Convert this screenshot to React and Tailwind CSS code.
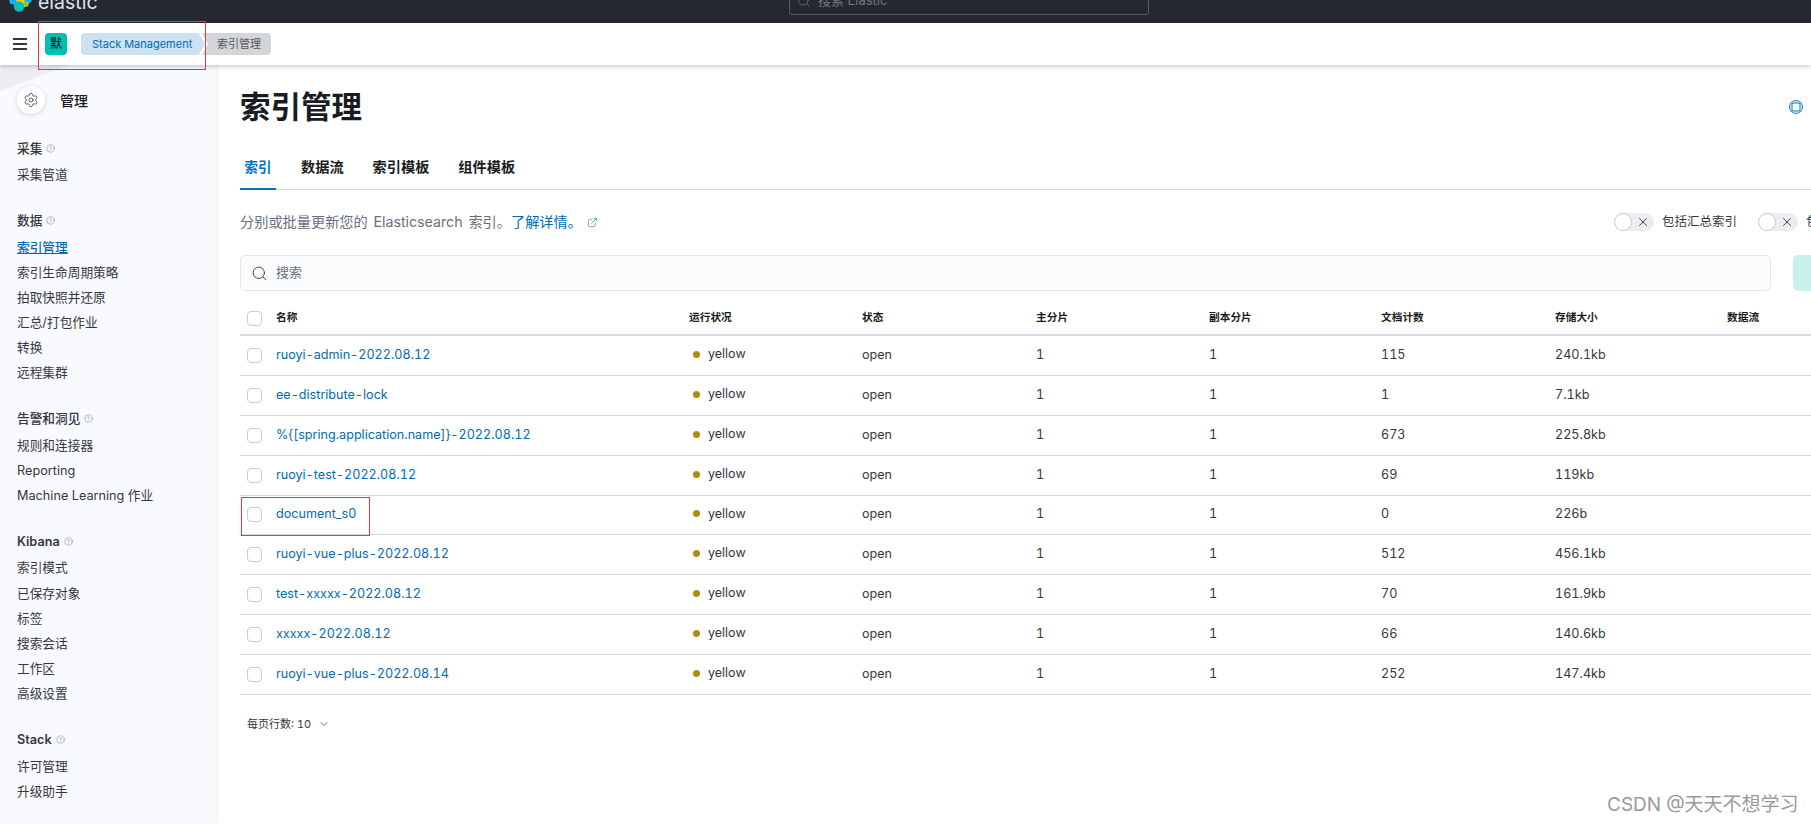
import { Search, ExternalLink, X, ChevronDown, Settings, CircleHelp } from "lucide-react";

const FONT = "font-['Inter','Noto_Sans_CJK_SC',sans-serif]";

const navGroups = [
  { title: "采集", items: ["采集管道"] },
  { title: "数据", items: ["索引管理", "索引生命周期策略", "拍取快照并还原", "汇总/打包作业", "转换", "远程集群"] },
  { title: "告警和洞见", items: ["规则和连接器", "Reporting", "Machine Learning 作业"] },
  { title: "Kibana", bold: true, items: ["索引模式", "已保存对象", "标签", "搜索会话", "工作区", "高级设置"] },
  { title: "Stack", bold: true, items: ["许可管理", "升级助手"] },
];

const tabs = ["索引", "数据流", "索引模板", "组件模板"];

const columns = ["运行状况", "状态", "主分片", "副本分片", "文档计数", "存储大小", "数据流"];

const rows = [
  ["ruoyi-admin-2022.08.12", "115", "240.1kb"],
  ["ee-distribute-lock", "1", "7.1kb"],
  ["%{[spring.application.name]}-2022.08.12", "673", "225.8kb"],
  ["ruoyi-test-2022.08.12", "69", "119kb"],
  ["document_s0", "0", "226b"],
  ["ruoyi-vue-plus-2022.08.12", "512", "456.1kb"],
  ["test-xxxxx-2022.08.12", "70", "161.9kb"],
  ["xxxxx-2022.08.12", "66", "140.6kb"],
  ["ruoyi-vue-plus-2022.08.14", "252", "147.4kb"],
];

function Checkbox() {
  return <div className="ml-[7px] h-[15px] w-[15px] rounded-[4px] border border-[#c9cbcd] bg-white" />;
}

function Toggle({ label }) {
  return (
    <div className="flex shrink-0 items-center">
      <div className="flex h-[18px] w-10 items-center justify-between rounded-full bg-[#ebedf0] pr-[4px]">
        <div className="h-[18px] w-[18px] rounded-full border border-[#c9cbcd] bg-white" />
        <X size={14} strokeWidth={1.5} className="text-[#343741]" />
      </div>
      <span className="ml-2 whitespace-nowrap text-[12.5px] text-[#343741]">{label}</span>
    </div>
  );
}

function Logo() {
  return (
    <svg width="23" height="16" viewBox="0 0 23 16" className="mt-[2px] shrink-0">
      <circle cx="12" cy="3" r="9" fill="#f4f6f8" />
      <circle cx="12" cy="1" r="6" fill="#fec514" />
      <circle cx="4" cy="5" r="3.6" fill="#1ba9f5" />
      <circle cx="19" cy="4" r="3.6" fill="#1ba9f5" />
      <circle cx="17" cy="8" r="2.8" fill="#93c90e" />
      <circle cx="10" cy="10.5" r="5.2" fill="#00bfb3" />
    </svg>
  );
}

export default function App() {
  return (
    <div className={`${FONT} relative flex h-[824px] w-[1811px] flex-col overflow-hidden bg-white tabular-nums`}>
      {/* Top bar, cut off by the screenshot */}
      <div className="relative flex h-[23px] shrink-0 items-start overflow-hidden bg-[#25282f]">
        <div className="-mt-[7px] ml-[9px] flex h-[20px] items-center">
          <Logo />
          <span className="ml-[6px] text-[19.5px] leading-none text-[#dfe5ef]">elastic</span>
        </div>
        <div className="absolute bottom-2 left-[789px] flex h-[26px] w-[360px] items-end rounded-[3px] border border-[#5a5d63] pb-[7px] pl-[7px]">
          <Search size={14} strokeWidth={1.4} className="-mb-[1px] text-[#74767b]" />
          <span className="ml-[7px] text-[13px] leading-none text-[#74767b]">搜索 Elastic</span>
        </div>
      </div>

      {/* Breadcrumb bar */}
      <div className="relative z-10 flex h-[42px] shrink-0 items-center bg-white shadow-[0_2px_4px_rgba(0,0,0,0.18)]">
        <div className="ml-[13px] flex w-[14px] flex-col gap-[3px]">
          <div className="h-[2px] bg-[#343741]" />
          <div className="h-[2px] bg-[#343741]" />
          <div className="h-[2px] bg-[#343741]" />
        </div>
        <div className="ml-[18px] flex h-[22px] w-[22px] items-center justify-center rounded-[4px] bg-[#00bfb3] text-[12px] text-black">默</div>
        <div className="ml-[14px] flex h-[22px] w-[124px] items-center rounded-l-[4px] bg-[#cce2f3] pl-[11px] text-[11px] text-[#006bb4] [clip-path:polygon(0_0,95%_0,100%_50%,95%_100%,0_100%)]">
          Stack Management
        </div>
        <div className="-ml-[3px] flex h-[22px] w-[69px] items-center rounded-r-[4px] bg-[#d4d5d8] pl-[15px] text-[11px] text-[#53565e] [clip-path:polygon(0_0,100%_0,100%_100%,0_100%,6px_50%)]">
          索引管理
        </div>
      </div>

      <div className="flex min-h-0 flex-1">
        {/* Sidebar */}
        <div className="relative w-[217px] shrink-0 bg-[#f9fafd] pl-[17px] pt-[21px] shadow-[1px_0_2px_rgba(0,0,0,0.06)]">
          <svg className="absolute left-0 top-0" width="70" height="26" viewBox="0 0 70 26">
            <polygon points="0,0 70,0 0,26" fill="#eceef2" />
          </svg>
          <div className="relative flex items-center">
            <div className="flex h-[28px] w-[28px] items-center justify-center rounded-full bg-white shadow-[0_1px_5px_rgba(0,0,0,0.16)]">
              <Settings size={16} strokeWidth={1.2} className="text-[#343741]" />
            </div>
            <span className="ml-[15px] text-[14px] font-medium text-[#1a1c21]">管理</span>
          </div>
          <div className="mt-[20.5px]">
            {navGroups.map((group) => (
              <div key={group.title} className="mb-[20px]">
                <div
                  className={
                    group.bold
                      ? "flex h-[27.5px] items-center text-[12.7px] font-semibold text-[#343741]"
                      : "flex h-[27.5px] items-center text-[12.7px] font-medium text-[#343741]"
                  }
                >
                  {group.title}
                  <CircleHelp size={9} strokeWidth={1.2} className="ml-[4px] text-[#69707d]" />
                </div>
                {group.items.map((item) => (
                  <div
                    key={item}
                    className={
                      item === "索引管理"
                        ? "flex h-[25.1px] items-center text-[12.7px] font-medium text-[#006bb4] underline"
                        : "flex h-[25.1px] items-center text-[12.7px] text-[#343741]"
                    }
                  >
                    {item}
                  </div>
                ))}
              </div>
            ))}
          </div>
        </div>

        {/* Main content */}
        <div className="min-w-0 flex-1 pl-[23px] pt-[21px]">
          <div className="flex h-[42px] items-center justify-between">
            <h1 className="text-[30.5px] font-bold leading-none text-[#1a1c21]">索引管理</h1>
            <svg width="14" height="14" viewBox="0 0 14 14" fill="none" stroke="#0071c2" strokeWidth="1" className="mr-[8px]">
              <circle cx="7" cy="7" r="6.4" />
              <rect x="3" y="3" width="8" height="8" rx="1.2" />
              <path d="M2.4 2.4L3.6 3.6M11.6 2.4L10.4 3.6M2.4 11.6L3.6 10.4M11.6 11.6L10.4 10.4" />
            </svg>
          </div>

          {/* Tabs */}
          <div className="mt-[20px] flex h-[42px] gap-[29px] border-b border-[#d3dae6]">
            {tabs.map((tab, i) => (
              <div
                key={tab}
                className={
                  i === 0
                    ? "-mb-px -mr-[4px] flex h-[42px] w-[36px] items-center justify-center border-b-2 border-[#0071c2] pb-[2px] text-[13.4px] font-semibold text-[#0071c2]"
                    : "flex h-[42px] items-center pb-[4px] text-[14.2px] font-semibold text-[#1a1c21]"
                }
              >
                {tab}
              </div>
            ))}
          </div>

          {/* Description and toggles */}
          <div className="mt-[23px] flex h-[18px] items-center">
            <span className="whitespace-nowrap text-[14.2px] text-[#69707d] [word-spacing:2px]">分别或批量更新您的 Elasticsearch 索引。</span>
            <span className="whitespace-nowrap text-[14.2px] text-[#006bb4]">了解详情。</span>
            <ExternalLink size={11} strokeWidth={1.2} className="ml-[5px] text-[#006bb4]" />
            <div className="ml-auto flex w-[197px] shrink-0 gap-[21px] pr-0">
              <Toggle label="包括汇总索引" />
              <Toggle label="包括隐藏索引" />
            </div>
          </div>

          {/* Search */}
          <div className="mt-[24px] flex h-[36px] gap-[22px]">
            <div className="flex w-[1531px] shrink-0 items-center rounded-[5px] border border-[#e3e6ef] bg-[#fbfcfd] pl-[10px]">
              <Search size={17} strokeWidth={1.3} className="text-[#343741]" />
              <span className="ml-[8px] text-[13px] text-[#69707d]">搜索</span>
            </div>
            <div className="w-[120px] shrink-0 rounded-[5px] bg-[#c9f0ec]" />
          </div>

          {/* Index table */}
          <div className="mt-[10px] w-[1640px]">
            <div className="grid h-[35px] grid-cols-[36px_413px_173px_174px_173px_172px_174px_172px_173px] items-center border-b-2 border-[#d3dae6] pt-[2px] text-[10.7px] font-semibold text-[#1a1c21]">
              <Checkbox />
              <span>名称</span>
              {columns.map((col) => (
                <span key={col}>{col}</span>
              ))}
            </div>
            {rows.map(([name, docs, size]) => (
              <div
                key={name}
                className="grid h-[39.875px] grid-cols-[36px_413px_173px_174px_173px_172px_174px_172px_173px] items-center border-b border-[#d3dae6] text-[12.6px] text-[#343741]"
              >
                <Checkbox />
                <span className="text-[#006bb4]">{name}</span>
                <span className="-mt-[2px] flex items-center pl-[4px]">
                  <span className="h-[7px] w-[7px] rounded-full bg-[#b58a10]" />
                  <span className="ml-[8px] text-[12.5px]">yellow</span>
                </span>
                <span>open</span>
                <span>1</span>
                <span>1</span>
                <span>{docs}</span>
                <span>{size}</span>
                <span />
              </div>
            ))}
          </div>

          {/* Pagination */}
          <div className="mt-[20px] flex h-[18px] items-center pl-[7px] text-[11px] text-[#343741]">
            每页行数: 10
            <ChevronDown size={12} strokeWidth={1.4} className="ml-[7px] text-[#343741]" />
          </div>
        </div>
      </div>

      {/* Red annotation boxes drawn over the screenshot */}
      <div className="absolute left-[38px] top-[21px] z-20 h-[49px] w-[168px] border border-[#e53935]" />
      <div className="absolute left-[241px] top-[497px] z-20 h-[39px] w-[129px] border border-[#e53935]" />

      {/* Watermark */}
      <div className="absolute left-[1607px] top-[793px] z-20 whitespace-nowrap text-[19px] leading-[24px] text-[#999999]">
        CSDN @天天不想学习
      </div>
    </div>
  );
}
